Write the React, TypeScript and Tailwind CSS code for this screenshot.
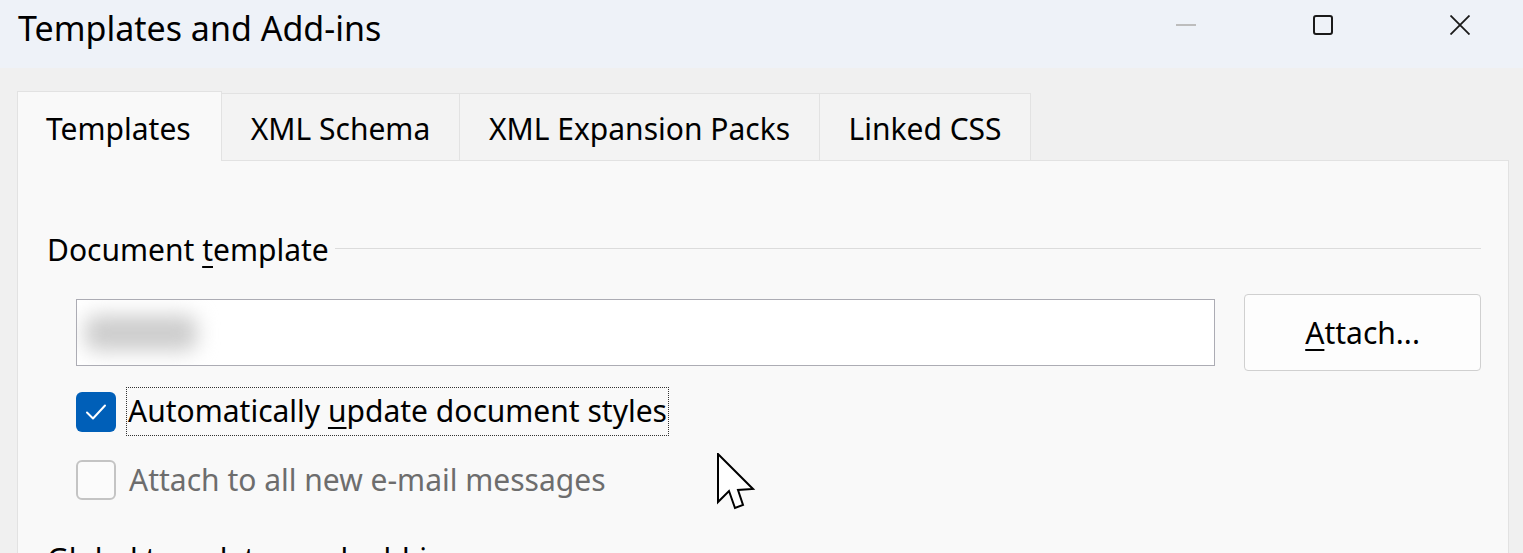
const font = { fontFamily: '"Noto Sans", "Open Sans", sans-serif' }

// 탭 목록
const tabs = ['Templates', 'XML Schema', 'XML Expansion Packs', 'Linked CSS']

function TitleBar() {
  return (
    <div className="h-[68px] bg-[#eef2f8] flex items-start justify-between">
      <h1 className="pl-[18px] pt-[8px] text-[34px] text-black leading-[40px]">Templates and Add-ins</h1>
      <div className="flex items-center gap-[117px] mr-[53px] h-[20px] mt-[15px]">
        <div className="w-[20px] h-[2px] bg-[#bdbdbd]" />
        <div className="w-[20px] h-[20px] border-2 border-[#1a1a1a] rounded-[3px]" />
        <svg width="20" height="20" viewBox="0 0 20 20" fill="none" stroke="#1a1a1a" strokeWidth="1.8">
          <path d="M0.5 0.5 L19.5 19.5 M19.5 0.5 L0.5 19.5" />
        </svg>
      </div>
    </div>
  )
}

function Checkbox({ checked }: { checked: boolean }) {
  return checked ? (
    <div className="w-[40px] h-[40px] rounded-[6px] bg-[#005fb8] flex items-center justify-center shrink-0">
      <svg width="22" height="18" viewBox="0 0 22 18" fill="none" stroke="white" strokeWidth="2" strokeLinecap="round" strokeLinejoin="round">
        <path d="M2 9.5 L8 15.5 L20 2.5" />
      </svg>
    </div>
  ) : (
    <div className="w-[40px] h-[40px] rounded-[6px] border-2 border-[#c4c4c4] bg-[#fbfbfb] shrink-0" />
  )
}

export default function App() {
  return (
    <div className="w-[1523px] h-[553px] overflow-hidden bg-[#f0f0f0] relative" style={font}>
      <TitleBar />

      <div className="pl-[17px] pr-[14px] pt-[23px]">
        {/* 탭 */}
        <div className="flex items-end">
          {tabs.map((t, i) =>
            i === 0 ? (
              <div
                key={t}
                className="h-[70px] w-[205px] bg-[#f9f9f9] border border-b-0 border-[#e2e2e2] flex items-center pl-[28px] pt-[3px] text-[30px] text-black relative z-10 -mb-px"
              >
                {t}
              </div>
            ) : (
              <div
                key={t}
                className={`h-[67px] bg-[#f3f3f3] border border-l-0 border-b-0 border-[#e2e2e2] flex items-center justify-center pt-[3px] text-[30px] text-black ${
                  i === 1 ? 'w-[238px]' : i === 2 ? 'w-[360px]' : 'w-[211px]'
                }`}
              >
                {t}
              </div>
            )
          )}
        </div>

        {/* 패널 */}
        <div className="bg-[#f9f9f9] border border-[#e2e2e2] h-[400px] pl-[29px] pr-[27px] pt-[71px]">
          <div className="flex items-center gap-[6px] h-[36px]">
            <span className="text-[30px] text-black leading-none">
              Document <span className="underline underline-offset-[5px] decoration-[1.5px]">t</span>emplate
            </span>
            <div className="flex-1 h-px bg-[#dcdcdc] -mt-[4px]" />
          </div>

          <div className="flex items-center mt-[26px] pl-[29px] gap-[29px]">
            <div className="w-[1140px] h-[67px] bg-white border border-[#acacb4] flex items-center overflow-hidden">
              <div className="ml-[8px] w-[112px] h-[36px] rounded-[10px] bg-[#cdcdcd] blur-[10px]" />
            </div>
            <button className="w-[237px] h-[77px] bg-[#fdfdfd] border border-[#d0d0d0] rounded-[4px] text-[30px] text-black">
              <span className="underline underline-offset-[5px] decoration-[1.5px]">A</span>ttach...
            </button>
          </div>

          <div className="pl-[29px] mt-[16px] flex items-center gap-[10px]">
            <Checkbox checked />
            <span className="text-[30px] text-black leading-none border border-dotted border-[#333] px-[1px] pt-[8px] pb-[9px]">
              Automatically <span className="underline underline-offset-[5px] decoration-[1.5px]">u</span>pdate document styles
            </span>
          </div>

          <div className="pl-[29px] mt-[24px] flex items-center gap-[13px]">
            <Checkbox checked={false} />
            <span className="text-[30px] text-[#6d6d6d] leading-none">Attach to all new e-mail messages</span>
          </div>

          <div className="mt-[44px] text-[30px] text-black leading-none">Global templates and add-ins</div>
        </div>
      </div>

      {/* 마우스 커서 */}
      <svg className="absolute left-[717px] top-[453px]" width="40" height="58" viewBox="-1 -1 40 58">
        <path d="M0 0 L0 48 L11 37 L17 54 L25 51 L20 36 L35 35 Z" fill="white" stroke="black" strokeWidth="2" strokeLinejoin="miter" />
      </svg>
    </div>
  )
}
